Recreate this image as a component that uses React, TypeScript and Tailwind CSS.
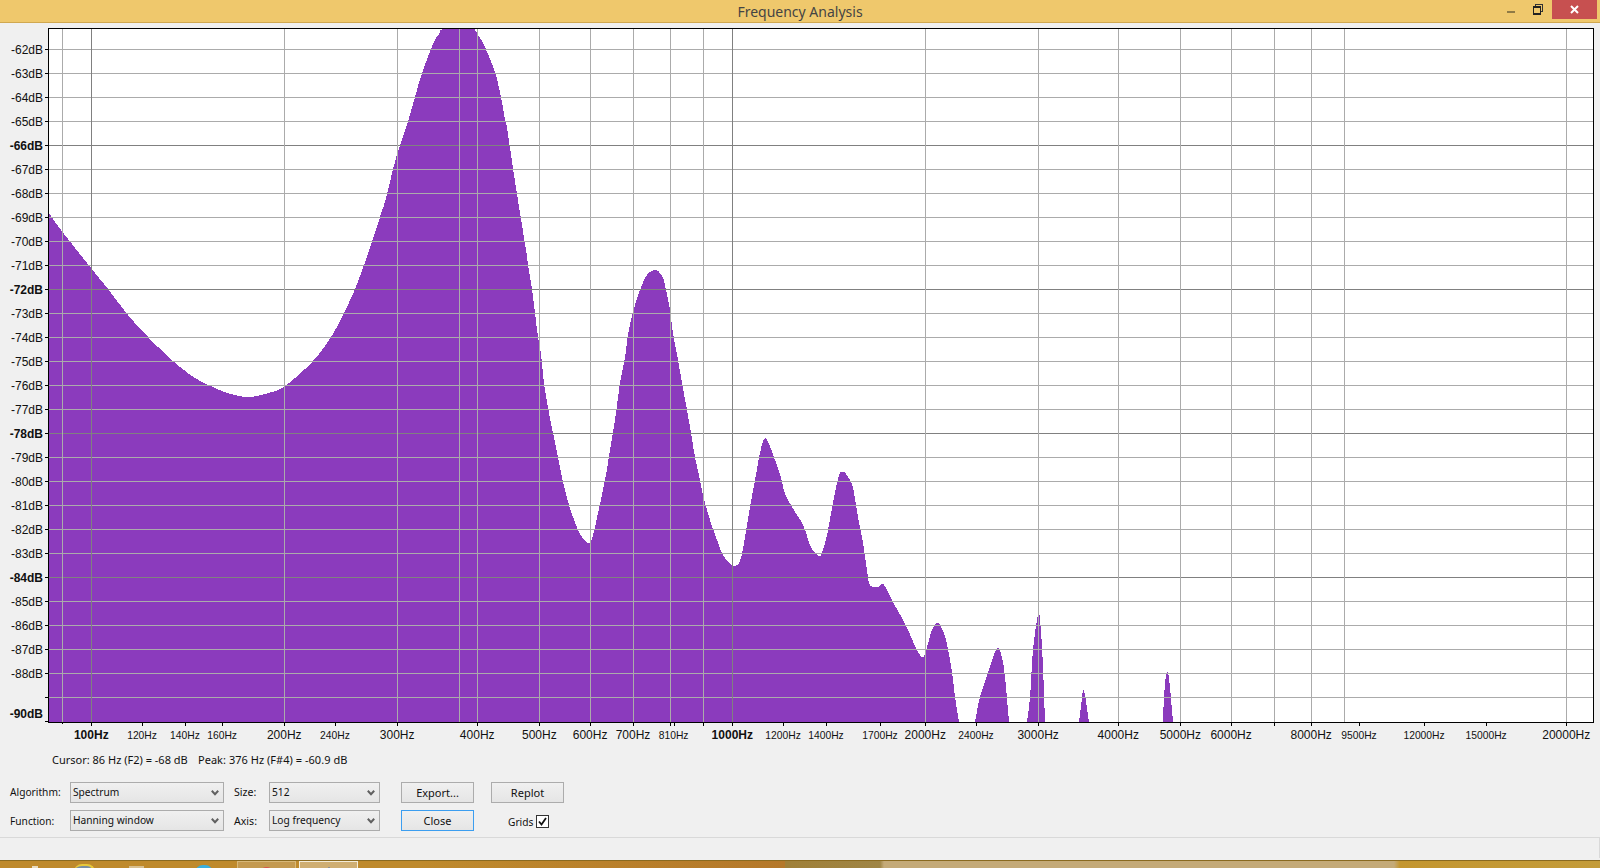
// Frequency analysis window
const logX = (f: number) => 91.3 + 641 * Math.log10(f / 100);
const dbY = (db: number) => 49 + 24 * (-62 - db);
const px = (v: number) => Math.round(v) + 0.5;

const TOP = 29;
const FLOOR = 722;

// traced outline of the spectrum, one list per filled lump
const LUMPS: number[][][] = [
  [
    [49, 213], [61, 230], [91, 268], [108, 289], [128, 315], [148, 337], [173, 361], [195, 378], [215, 388],
    [231, 394], [248, 397], [265, 394], [285, 386], [313, 361], [331, 337], [344, 313], [355, 289], [364, 265],
    [372, 242], [380, 217], [386, 198], [396, 158], [406, 128], [409, 118], [415, 97], [422, 73], [431, 49],
    [435, 40], [439, 34], [444, 29], [474, 29], [475, 30], [483, 43], [487, 52], [495, 72], [501, 97], [505, 120],
    [507, 128], [516, 188], [526, 250], [528, 265], [532, 289], [535, 313], [538, 337], [541, 354], [544, 383],
    [549, 413], [553, 433], [558, 457], [563, 482], [569, 505], [576, 525], [582, 537], [589, 543], [593, 535],
    [598, 513], [605, 480], [610, 450], [615, 420], [620, 383], [625, 357], [628, 335], [633, 312], [640, 290],
    [647, 275], [654, 270], [658, 271], [663, 278], [666, 290], [670, 310], [673, 333], [678, 360], [682, 383],
    [687, 410], [691, 433], [695, 457], [700, 480], [703, 495], [710, 520], [717, 540], [723, 555], [732, 565],
    [737, 565], [741, 558], [745, 537], [750, 507], [755, 480], [760, 453], [764, 439], [768, 442], [775, 460],
    [781, 478], [785, 494], [792, 507], [803, 525], [810, 545], [815, 553], [820, 556], [822, 553], [827, 535],
    [832, 508], [837, 483], [840, 473], [844, 472], [848, 477], [853, 488], [858, 517], [863, 543], [867, 570],
    [869, 583], [873, 587], [878, 587], [883, 584], [888, 592], [893, 602], [902, 618], [908, 630], [917, 650],
    [923, 657], [927, 647], [932, 630], [937, 623], [941, 627], [946, 640], [952, 672], [955, 697], [959, 722],
  ],
  [[975, 722], [980, 697], [988, 673], [997, 648], [1002, 658], [1005, 677], [1009, 722]],
  [[1027, 722], [1030, 697], [1033, 650], [1037, 620], [1039, 612], [1041, 632], [1043, 667], [1045, 722]],
  [[1079, 722], [1082, 698], [1083, 690], [1085, 695], [1089, 722]],
  [[1163, 722], [1164, 697], [1166, 675], [1168, 673], [1170, 688], [1173, 722]],
];

// rounds off the traced corners
const smooth = (pts: number[][]) => {
  const out: number[][] = [];
  for (let i = 0; i < pts.length - 1; i++) {
    const p0 = pts[Math.max(i - 1, 0)];
    const p1 = pts[i];
    const p2 = pts[i + 1];
    const p3 = pts[Math.min(i + 2, pts.length - 1)];
    for (let s = 0; s < 5; s++) {
      const t = s / 5;
      const at = (k: number) =>
        0.5 *
        (2 * p1[k] +
          (p2[k] - p0[k]) * t +
          (2 * p0[k] - 5 * p1[k] + 4 * p2[k] - p3[k]) * t * t +
          (3 * p1[k] - p0[k] - 3 * p2[k] + p3[k]) * t * t * t);
      out.push([at(0), Math.min(FLOOR, Math.max(TOP, at(1)))]);
    }
  }
  out.push(pts[pts.length - 1]);
  return out;
};

const GRID_FREQS = [90, 100, 200, 300, 400, 500, 600, 700, 800, 900, 1000, 2000, 3000, 4000, 5000, 6000, 7000, 8000, 9000, 20000];
const DARK_FREQS = [100, 1000];
const DARK_DB = [-66, -72, -78, -84];
const BOLD_DB = [-66, -72, -78, -84];
const PEAK_X = 459;

type FreqLabel = { f: number; kind: "major" | "minor" | "bold" };
const FREQ_LABELS: FreqLabel[] = [
  { f: 100, kind: "bold" },
  { f: 120, kind: "minor" },
  { f: 140, kind: "minor" },
  { f: 160, kind: "minor" },
  { f: 200, kind: "major" },
  { f: 240, kind: "minor" },
  { f: 300, kind: "major" },
  { f: 400, kind: "major" },
  { f: 500, kind: "major" },
  { f: 600, kind: "major" },
  { f: 700, kind: "major" },
  { f: 810, kind: "minor" },
  { f: 1000, kind: "bold" },
  { f: 1200, kind: "minor" },
  { f: 1400, kind: "minor" },
  { f: 1700, kind: "minor" },
  { f: 2000, kind: "major" },
  { f: 2400, kind: "minor" },
  { f: 3000, kind: "major" },
  { f: 4000, kind: "major" },
  { f: 5000, kind: "major" },
  { f: 6000, kind: "major" },
  { f: 8000, kind: "major" },
  { f: 9500, kind: "minor" },
  { f: 12000, kind: "minor" },
  { f: 15000, kind: "minor" },
  { f: 20000, kind: "major" },
];

const dbLevels = Array.from({ length: 28 }, (_, i) => -62 - i);

const Plot = () => (
  <svg
    width={1600}
    height={725}
    viewBox="0 23 1600 725"
    className="block font-['Liberation_Sans',sans-serif]"
  >
    <rect x={48} y={28} width={1546} height={694} fill="#ffffff" />
    <g shapeRendering="crispEdges">
      {LUMPS.map((pts, i) => (
        <polygon
          key={i}
          fill="#8b3bbd"
          points={[...smooth(pts), [pts[pts.length - 1][0], FLOOR], [pts[0][0], FLOOR]]
            .map((p) => p.join(","))
            .join(" ")}
        />
      ))}
      {dbLevels.map((db) => (
        <line
          key={db}
          x1={48}
          x2={1594}
          y1={dbY(db) + 0.5}
          y2={dbY(db) + 0.5}
          stroke={DARK_DB.includes(db) ? "#808080" : "#ababab"}
        />
      ))}
      {GRID_FREQS.map((f) => (
        <line
          key={f}
          x1={px(logX(f))}
          x2={px(logX(f))}
          y1={28}
          y2={722}
          stroke={DARK_FREQS.includes(f) ? "#808080" : "#ababab"}
        />
      ))}
      <line x1={PEAK_X + 0.5} x2={PEAK_X + 0.5} y1={28} y2={722} stroke="#ababab" />
      <rect x={48.5} y={28.5} width={1545} height={693.5} fill="none" stroke="#000000" />
      {[...dbLevels, -90].map((db) => (
        <line key={db} x1={45} x2={48} y1={dbY(db) + 0.5} y2={dbY(db) + 0.5} stroke="#000000" />
      ))}
      {[90, 800, 900, 7000, ...FREQ_LABELS.map((l) => l.f)].map((f, i) => (
        <line key={i} x1={px(logX(f))} x2={px(logX(f))} y1={722} y2={f === 90 ? 724 : 726} stroke="#000000" />
      ))}
    </g>
    {dbLevels
      .filter((db) => db !== -89)
      .map((db) => (
        <text
          key={db}
          x={43}
          y={dbY(db) + 5}
          textAnchor="end"
          fontSize={12}
          fontWeight={BOLD_DB.includes(db) ? 700 : 400}
          fill="#111111"
        >
          {db}dB
        </text>
      ))}
    <text x={43} y={718} textAnchor="end" fontSize={12} fontWeight={700} fill="#111111">
      -90dB
    </text>
    {FREQ_LABELS.map((l) => (
      <text
        key={l.f}
        x={logX(l.f)}
        y={738.5}
        textAnchor="middle"
        fontSize={l.kind === "minor" ? 10.3 : 12}
        fontWeight={l.kind === "bold" ? 700 : 400}
        fill="#111111"
      >
        {l.f}Hz
      </text>
    ))}
  </svg>
);

const Combo = ({ value }: { value: string }) => (
  <div className="flex h-[21px] items-center justify-between border border-[#acacac] bg-[linear-gradient(#f0f0f0,#e5e5e5)] pl-[2px] pr-[4px] text-[10.2px]">
    <span className="pt-px">{value}</span>
    <svg width={8} height={6} viewBox="0 0 8 6">
      <polyline points="0.8,0.8 4,4.2 7.2,0.8" fill="none" stroke="#606060" strokeWidth={2} />
    </svg>
  </div>
);

const PushButton = ({ label, focused }: { label: string; focused?: boolean }) => (
  <div
    className={`flex h-[21px] items-center justify-center border bg-[linear-gradient(#f0f0f0,#e5e5e5)] pt-px ${
      focused ? "border-[#3c9ef0]" : "border-[#acacac]"
    }`}
  >
    {label}
  </div>
);

const Taskbar = () => (
  <div className="flex h-[8px] items-start overflow-hidden border-t border-[#8a6a20] bg-[linear-gradient(90deg,#bf8a2c_0,#bf8a2c_420px,#b5782a_785px,#a08038_785px,#9f8545_880px,#c4aa78_884px,#c4aa78_1394px,#c4962f_1400px,#c49c3a_1600px)]">
    <div className="ml-[32px] mt-[5px] h-[3px] w-[6px] bg-[#e8dcc0]" />
    <div className="ml-[36px] mt-[3px] h-[16px] w-[21px] rounded-full border-t-[2px] border-r-[2px] border-[#e8c83a] bg-[#7a8ea0]" />
    <div className="ml-[34px] mt-[5px] h-[3px] w-[15px] bg-[#d8c090]" />
    <div className="ml-[51px] mt-[4px] h-[16px] w-[18px] rounded-full bg-[#3ab0e0]" />
    <div className="ml-[24px] flex h-[8px] w-[59px] justify-center border-x border-t border-[#d8b878] bg-[#c49a50]">
      <div className="mt-[5px] h-[16px] w-[15px] rounded-full bg-[#d9534f]" />
    </div>
    <div className="ml-[3px] flex h-[8px] w-[59px] justify-center border-x border-t border-[#f4ecd8] bg-[#cfae72]">
      <div className="mt-[5px] h-[3px] w-[2px] bg-[#909090]" />
    </div>
  </div>
);

export default function App() {
  return (
    <div className="flex h-[868px] w-[1600px] flex-col overflow-hidden bg-[#f0f0f0] font-['Noto_Sans',sans-serif] text-[11px] text-[#111111]">
      {/* Title bar */}
      <div className="relative flex h-[23px] items-center justify-center border-b border-[#d0a850] bg-[#efc86c]">
        <span className="text-[14px] text-[#444444]">Frequency Analysis</span>
        <div className="absolute right-[3px] top-0 flex items-start">
          <div className="mr-[18px] mt-[11px] h-[2px] w-[8px] bg-[#8f7a45]" />
          <svg width={11} height={11} viewBox="0 0 11 11" className="mr-[8px] mt-[4px]" shapeRendering="crispEdges">
            <path d="M2.5 2.5V0.5H9.5V7.5H7.5" fill="none" stroke="#333333" />
            <rect x={0.5} y={3} width={7} height={7} fill="none" stroke="#222222" strokeWidth={1.4} />
          </svg>
          <div className="flex h-[19px] w-[45px] items-center justify-center bg-[#c75050]">
            <svg width={9} height={9} viewBox="0 0 9 9">
              <path d="M1 1L8 8M8 1L1 8" fill="none" stroke="#ffffff" strokeWidth={2} />
            </svg>
          </div>
        </div>
      </div>

      <Plot />

      {/* Cursor readout */}
      <div className="mt-[5px] flex h-[14px] items-center pl-[52px] leading-[14px]">
        <span className="w-[146px]">Cursor: 86 Hz (F2) = -68 dB</span>
        <span className="tracking-[0.03px]">Peak: 376 Hz (F#4) = -60.9 dB</span>
      </div>

      {/* Controls */}
      <div className="mt-[15px] grid grid-cols-[60px_154px_45px_111px_73px_73px] grid-rows-[21px_21px] items-center gap-y-[7px] pl-[10px]">
        <span className="pt-px text-[10.2px]">Algorithm:</span>
        <Combo value="Spectrum" />
        <span className="pl-[10px] pt-px text-[10.6px]">Size:</span>
        <Combo value="512" />
        <div className="ml-[21px] w-[73px]">
          <PushButton label="Export..." />
        </div>
        <div className="ml-[38px] w-[73px]">
          <PushButton label="Replot" />
        </div>
        <span className="pt-[2px] text-[10.2px]">Function:</span>
        <Combo value="Hanning window" />
        <span className="pl-[10px] pt-[2px] text-[10.6px]">Axis:</span>
        <Combo value="Log frequency" />
        <div className="ml-[21px] w-[73px]">
          <PushButton label="Close" focused />
        </div>
        <div className="ml-[55px] flex w-[60px] items-center gap-[3px] pt-[3px]">
          <span className="pt-[2px] text-[10.2px]">Grids</span>
          <div className="-mt-[1px] flex h-[13px] w-[13px] items-center justify-center border border-[#333333] bg-white">
            <svg width={9} height={9} viewBox="0 0 9 9">
              <path d="M1 4.5L3.5 7.5L8 1" fill="none" stroke="#111111" strokeWidth={1.8} />
            </svg>
          </div>
        </div>
      </div>

      {/* Status bar */}
      <div className="mt-[6px] flex h-[23px] justify-end border-t border-[#d9d9d9]">
        <div className="mb-[2px] w-px bg-[#d9d9d9]" />
      </div>

      <Taskbar />
    </div>
  );
}
